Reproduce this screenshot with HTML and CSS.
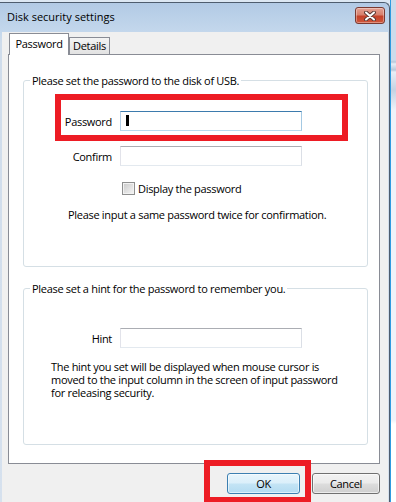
FILE: index.html
```html
<!DOCTYPE html>
<html>
<head>
<meta charset="utf-8">
<title>Disk security settings</title>
<link rel="stylesheet" href="styles.css">
</head>
<body>
<div class="desk">
  <div class="window">
    <div class="titlebar">
      <span class="title">Disk security settings</span>
      <div class="close">
        <svg width="12" height="10" viewBox="0 0 12 10">
          <path d="M2 1.5 L10 8.5 M10 1.5 L2 8.5" stroke="#5b3a36" stroke-width="4" stroke-linecap="round" fill="none"/>
          <path d="M2 1.5 L10 8.5 M10 1.5 L2 8.5" stroke="#ffffff" stroke-width="2" stroke-linecap="round" fill="none"/>
        </svg>
      </div>
    </div>
    <div class="client">
      <div class="tabs">
        <div class="tab active">Password</div>
        <div class="tab details">Details</div>
      </div>
      <div class="panel">
        <fieldset class="group g1">
          <legend>Please set the password to the disk of USB.</legend>
          <div class="row pw">
            <label>Password</label>
            <div class="input focus"><span class="caret"></span></div>
            <div class="mark mark-pw"></div>
          </div>
          <div class="row confirm">
            <label>Confirm</label>
            <div class="input"></div>
          </div>
          <div class="check"><span class="box"></span><span>Display the password</span></div>
          <p class="note">Please input a same password twice for confirmation.</p>
        </fieldset>
        <fieldset class="group g2">
          <legend>Please set a hint for the password to remember you.</legend>
          <div class="row hint">
            <label>Hint</label>
            <div class="input"></div>
          </div>
          <p class="hinttext">The hint you set will be displayed when mouse cursor is<br>moved to the input column in the screen of input password<br>for releasing security.</p>
        </fieldset>
      </div>
      <div class="buttons">
        <div class="okwrap">
          <div class="btn ok">OK</div>
          <div class="mark mark-ok"></div>
        </div>
        <div class="btn cancel">Cancel</div>
      </div>
    </div>
  </div>
  <div class="behind"></div>
</div>
</body>
</html>
```
FILE: styles.css
```css
* { box-sizing: border-box; }
html, body { margin: 0; padding: 0; }
body {
  width: 396px;
  height: 502px;
  overflow: hidden;
  background: #dce7f3;
  font-family: "Open Sans", "Noto Sans", sans-serif;
  font-size: 11px;
  letter-spacing: -0.3px;
  color: #000;
}
.desk { display: flex; height: 502px; }
.window {
  width: 390px;
  flex: none;
  margin-top: 2px;
  height: 500px;
  border: 1px solid #4e5d6f;
  border-left: none;
  border-bottom: none;
  border-top-right-radius: 6px;
  background: linear-gradient(#b2cae5 0, #c3d7ec 28px, #cfdceb 40px, #d6e1ee 100%);
  display: flex;
  flex-direction: column;
}
.titlebar {
  height: 29px;
  flex: none;
  display: flex;
  align-items: flex-start;
  padding-left: 7px;
}
.title { margin-top: 6px; line-height: 15px; font-size: 11px; letter-spacing: 0; }
.close {
  margin-left: auto;
  margin-top: 4px;
  margin-right: 4px;
  width: 30px;
  height: 17px;
  border: 1px solid #7a3a32;
  border-radius: 3px;
  background: linear-gradient(#e4a193 0%, #d7806d 45%, #c4422a 55%, #cf573c 100%);
  box-shadow: inset 0 0 0 1px rgba(255, 255, 255, 0.35);
  display: flex;
  align-items: center;
  justify-content: center;
}
.client {
  flex: 1;
  margin: 0 1px 0 2px;
  background: #f0f0f0;
  padding: 1px 8px 0 6px;
}
.tabs {
  display: flex;
  align-items: flex-end;
  height: 22px;
  padding-left: 1px;
  position: relative;
  z-index: 1;
}
.tab {
  border: 1px solid #898c95;
  border-bottom: none;
  text-align: center;
}
.tab.active {
  width: 60px;
  height: 22px;
  background: #fff;
  line-height: 20px;
}
.tab.details {
  width: 41px;
  height: 17px;
  margin-bottom: 1px;
  line-height: 15px;
  background: linear-gradient(#f4f4f4, #e2e2e2);
}
.panel {
  margin-top: -1px;
  height: 410px;
  background: #fff;
  border: 1px solid #898c95;
  padding: 18px 11px 0 14px;
}
.group {
  margin: 0;
  padding: 0;
  border: 1px solid #d5dfe5;
  border-radius: 3px;
  min-width: 0;
}
.group legend {
  margin-left: 6px;
  padding: 0 2px;
  line-height: 15px;
}
.g1 { padding-bottom: 44px; }
.g2 { margin-top: 14px; padding-bottom: 45px; }
.row {
  display: grid;
  grid-template-columns: 88px 182px;
  column-gap: 8px;
  align-items: center;
  position: relative;
}
.row label { text-align: right; line-height: 15px; }
.input {
  height: 20px;
  background: #fff;
  border: 1px solid;
  border-color: #abadb3 #dbdfe6 #e3e9ef #e2e3ea;
}
.input.focus {
  border-color: #3d7bad #a4c9e3 #b7d9ed #b5cfe7;
  padding: 3px 0 0 5px;
}
.caret { display: block; width: 3px; height: 11px; background: #000; }
.pw { margin-top: 23px; }
.confirm { margin-top: 15px; }
.check {
  margin: 15px 0 0 98px;
  display: flex;
  align-items: center;
  gap: 3px;
  line-height: 15px;
}
.box {
  width: 13px;
  height: 13px;
  border: 1px solid #8e8f8f;
  background: linear-gradient(135deg, #c9c9c9, #f6f6f6);
  box-shadow: inset 0 0 0 1px #f2f2f2;
}
.note { margin: 11px 0 0 44px; line-height: 15px; }
.hint { margin-top: 32px; }
.hinttext { margin: 12px 0 0 27px; line-height: 13px; white-space: nowrap; }
.buttons {
  display: flex;
  justify-content: flex-end;
  gap: 12px;
  margin-top: 9px;
}
.okwrap { position: relative; }
.btn {
  height: 21px;
  border-radius: 3px;
  text-align: center;
  line-height: 19px;
}
.ok {
  width: 73px;
  border: 1px solid #3c7fb1;
  background: linear-gradient(#e8f5fc 0%, #dbeffa 48%, #c4e4f5 52%, #b3dbf1 100%);
  box-shadow: inset 0 0 0 1px rgba(255, 255, 255, 0.55);
}
.cancel {
  width: 68px;
  border: 1px solid #707070;
  background: linear-gradient(#f2f2f2 0%, #ebebeb 48%, #dddddd 52%, #cfcfcf 100%);
  box-shadow: inset 0 0 0 1px rgba(255, 255, 255, 0.6);
}
.mark {
  position: absolute;
  border: 6px solid #ed1c24;
  pointer-events: none;
}
.mark-pw { left: 31px; top: -17px; width: 293px; height: 47px; }
.mark-ok { left: -23px; top: -13px; width: 107px; height: 43px; }
.behind {
  flex: 1;
  border-left: 1px solid #2f9be0;
  background: linear-gradient(#cddbeb 0, #cddbeb 60px, #b9c8da 62px, #e9eef6 64px, #b9c8da 70px, #e9eef6 72px, #c5d2e2 90px, #eef2f9 110px, #eef2f9 420px, #ffffff 424px);
}
```
